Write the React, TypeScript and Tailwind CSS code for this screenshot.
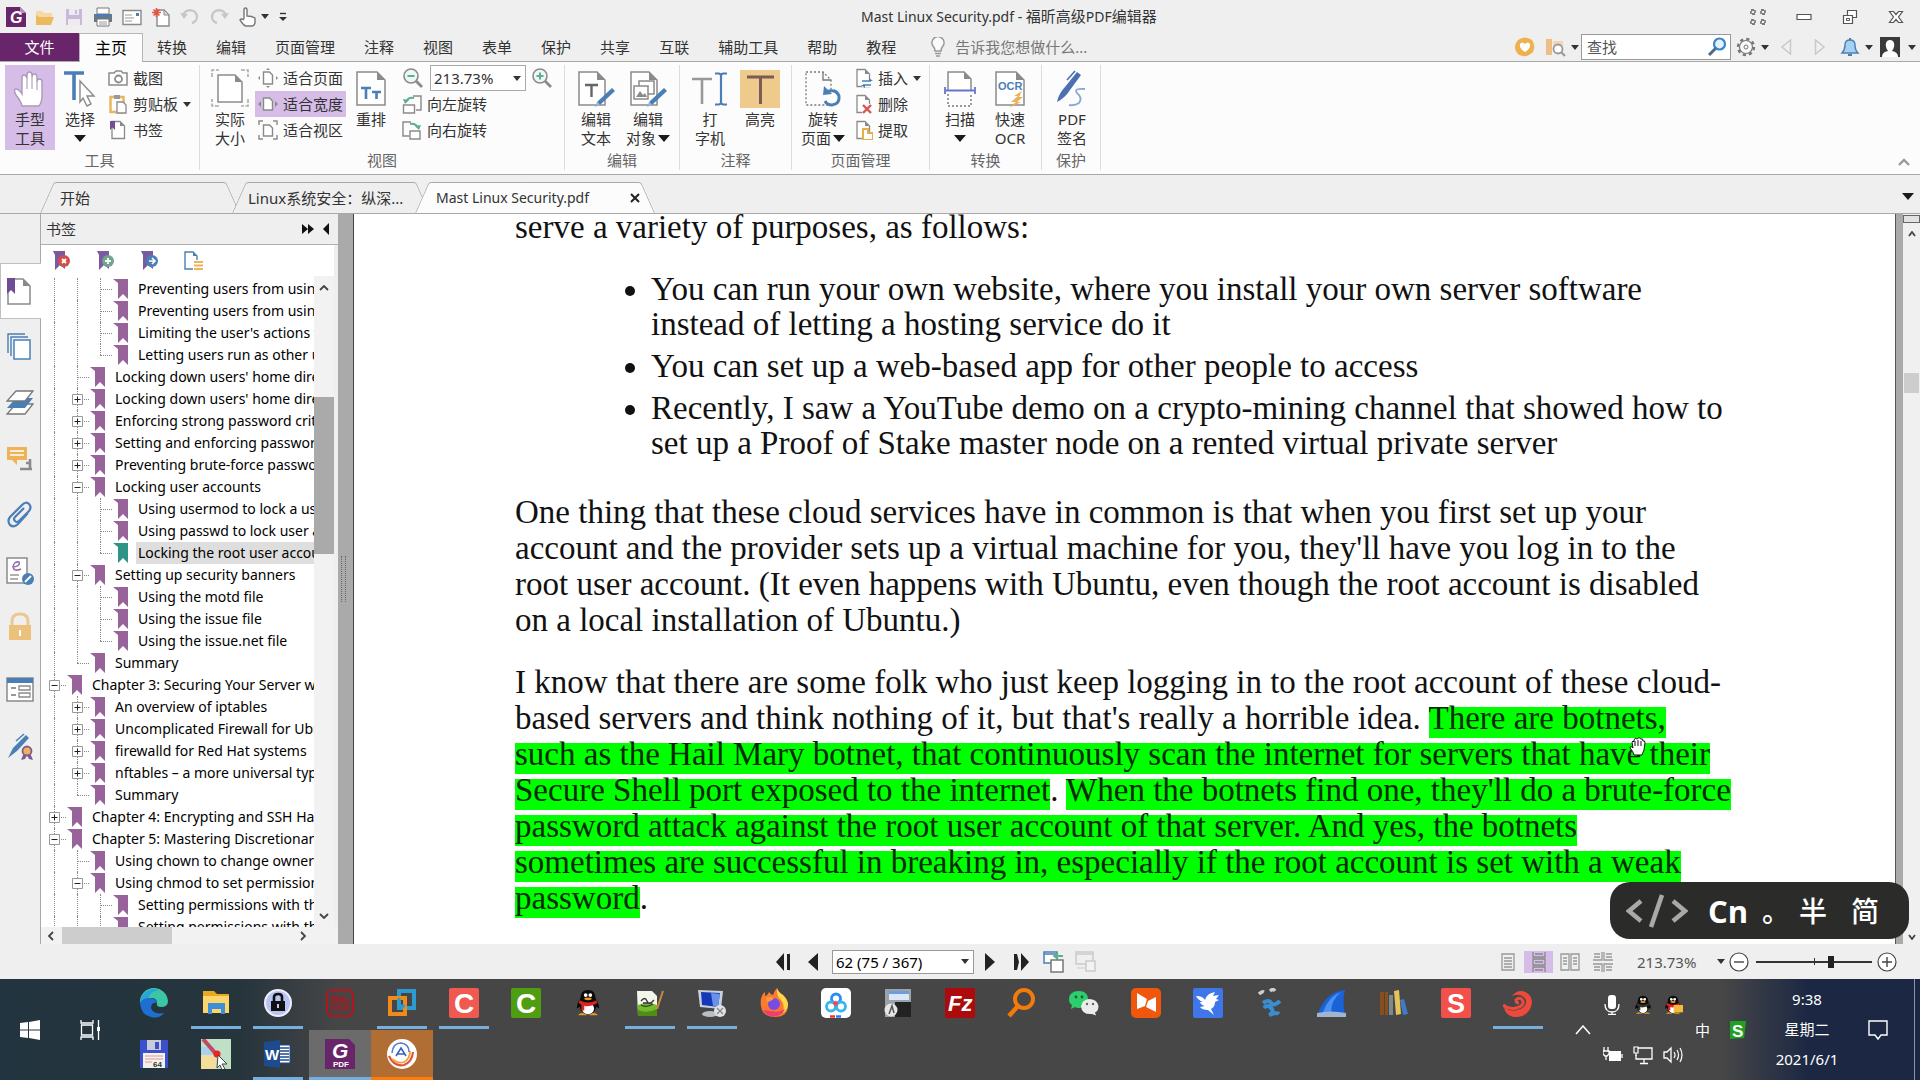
import type { ReactNode } from "react";

type IconProps = { w?: number; h?: number; box?: string; children: ReactNode };

function Icon({ w = 20, h = 20, box, children }: IconProps) {
  return (
    <svg width={w} height={h} viewBox={box ?? `0 0 ${w} ${h}`} fill="none" className="shrink-0" aria-hidden="true">
      {children}
    </svg>
  );
}

const GREY = "#8a8a8a";
const BLUE = "#4a7fb5";
const GREEN = "#5fae8f";

function Caret({ large = false }: { large?: boolean }) {
  return large ? (
    <Icon w={12} h={7}>
      <path d="M0 0h12L6 7z" fill="#1a1a1a" />
    </Icon>
  ) : (
    <Icon w={8} h={5}>
      <path d="M0 0h8L4 5z" fill="#333" />
    </Icon>
  );
}

function Page({ w = 20, h = 20, children }: { w?: number; h?: number; children?: ReactNode }) {
  return (
    <Icon w={w} h={h} box="0 0 20 20">
      <path d="M4 1.500h8l4.500 4.500v12.500H4z" fill="#fff" stroke={GREY} strokeWidth="1.300" />
      <path d="M12 1.500v4.500h4.500z" fill={GREY} />
      {children}
    </Icon>
  );
}

/* ---------- title bar ---------- */

const quickIcons = [
  {
    name: "Foxit",
    icon: (
      <Icon>
        <path d="M0 0h14l6 6v14H0z" fill="#68256a" />
        <path d="M14 0v6h6z" fill="#b98fbb" />
        <text x="4" y="16" fontSize="16" fontWeight="700" fontStyle="italic" fill="#fff" fontFamily="Liberation Sans">G</text>
      </Icon>
    ),
  },
  {
    name: "打开",
    icon: (
      <Icon>
        <path d="M1 4h6l2 2h8v4H1z" fill="#f4d9a4" />
        <path d="M1 18V8l3 2h15l-3 8z" fill="#ecb95f" />
      </Icon>
    ),
  },
  {
    name: "保存",
    icon: (
      <Icon>
        <path d="M2 2h16v16H2z" fill="#c9b9d6" />
        <path d="M5 2h10v6H5zM4 12h12v6H4z" fill="#eeeaf2" />
        <path d="M11 3h2v4h-2z" fill="#c9b9d6" />
      </Icon>
    ),
  },
  {
    name: "打印",
    icon: (
      <Icon>
        <path d="M4 1h12v6H4z" fill="#fff" stroke="#777" />
        <path d="M1 7h18v8H1z" fill="#6d7780" />
        <path d="M3 7h14v3H3z" fill={BLUE} />
        <path d="M4 12h12v7H4z" fill="#fff" stroke="#777" />
        <path d="M6 15h8M6 17h8" stroke="#999" />
      </Icon>
    ),
  },
  {
    name: "邮件",
    icon: (
      <Icon>
        <path d="M1 3.500h18v14H1z" fill="#fff" stroke="#8a8a8a" strokeWidth="1.400" />
        <path d="M3 8h7M3 11h9M3 14h7" stroke="#999" />
        <path d="M14 6h3v3h-3z" fill={BLUE} />
      </Icon>
    ),
  },
  {
    name: "新建",
    icon: (
      <Icon>
        <path d="M6 3h7l5 5v11H6z" fill="#fff" stroke={GREY} strokeWidth="1.400" />
        <path d="M13 3v5h5z" fill="#ddd" stroke={GREY} />
        <path d="M5.500 1v9M1 5.500h9M2.500 2.500l6 6M8.500 2.500l-6 6" stroke="#e0563f" strokeWidth="1.600" />
      </Icon>
    ),
  },
  {
    name: "撤销",
    icon: (
      <Icon>
        <path d="M3 9a7 6.500 0 1 1 9 7" stroke="#c3c8cc" strokeWidth="2.400" />
        <path d="M0 6l4 6 4-5z" fill="#c3c8cc" />
      </Icon>
    ),
  },
  {
    name: "重做",
    icon: (
      <Icon>
        <path d="M17 9a7 6.500 0 1 0-9 7" stroke="#c3c8cc" strokeWidth="2.400" />
        <path d="M20 6l-4 6-4-5z" fill="#c3c8cc" />
      </Icon>
    ),
  },
  {
    name: "手型",
    icon: (
      <Icon>
        <path d="M6 12V3q0-2 1.500-2T9 3v6q5 0 8 2v5q-1 3-3 3H8q-2 0-6-6 1-2 4 0" fill="#fff" stroke="#777" strokeWidth="1.400" />
      </Icon>
    ),
  },
];

function TitleBar() {
  return (
    <header className="relative flex h-[33px] items-center justify-between pl-[6px] pr-[16px]">
      <div className="flex items-center gap-[9px]">
        {quickIcons.map((item) => (
          <button key={item.name} type="button" aria-label={item.name} className="block">
            {item.icon}
          </button>
        ))}
        <div className="-ml-[6px] flex items-center gap-[10px]">
          <Caret />
          <Icon w={8} h={10}>
            <path d="M1 1.500h6" stroke="#333" strokeWidth="1.400" />
            <path d="M0 5h8L4 9z" fill="#333" />
          </Icon>
        </div>
      </div>
      <h1 className="absolute left-1/2 -translate-x-[99px] text-[14px] text-[#333]">
        Mast Linux Security.pdf - <span className="text-[15px]">福昕高级</span>PDF<span className="text-[15px]">编辑器</span>
      </h1>
      <div className="flex items-center gap-[30px]">
        <button type="button" aria-label="布局">
          <Icon w={16} h={16}>
            <path d="M1 1h4v4H1zM11 1h4v4h-4zM1 11h4v4H1zM11 11h4v4h-4z" stroke="#555" strokeWidth="1.300" strokeDasharray="3 1" />
          </Icon>
        </button>
        <button type="button" aria-label="最小化">
          <Icon w={16} h={16}>
            <path d="M1 5.500h14v5H1z" stroke="#555" strokeWidth="1.200" fill="#fff" />
          </Icon>
        </button>
        <button type="button" aria-label="还原">
          <Icon w={16} h={16}>
            <path d="M5.500 1.500h9v7h-9z" stroke="#555" strokeWidth="1.200" fill="#fff" />
            <path d="M1.500 6.500h9v8h-9z" stroke="#555" strokeWidth="1.200" fill="#fff" />
            <path d="M4.500 9.500h3v2h-3z" stroke="#555" />
          </Icon>
        </button>
        <button type="button" aria-label="关闭">
          <Icon w={16} h={16}>
            <path d="M1.500 2.500h4L8 5.500l2.500-3h4L10.500 8l4 5.500h-4L8 10.500l-2.500 3h-4L5.500 8z" stroke="#555" strokeWidth="1.200" fill="#fff" />
          </Icon>
        </button>
      </div>
    </header>
  );
}

/* ---------- menu ---------- */

const menus = ["转换", "编辑", "页面管理", "注释", "视图", "表单", "保护", "共享", "互联", "辅助工具", "帮助", "教程"];

function MenuBar() {
  return (
    <nav className="flex h-[29px] items-stretch justify-between border-b border-[#a9a9a9] text-[15px] text-[#333]">
      <div className="flex items-stretch">
        <button type="button" className="w-[79px] bg-[#68256a] text-white">文件</button>
        <button type="button" className="-mb-px w-[64px] border-x border-t border-[#b5b5b5] bg-[#fcfcfc] text-[16px] text-black">主页</button>
        {menus.map((label) => (
          <button key={label} type="button" className="pl-[14px] pr-[15px]">
            {label}
          </button>
        ))}
        <label className="ml-[19px] flex items-center gap-[9px] text-[#777]">
          <Icon w={16} h={20}>
            <path d="M5 14q0-3-2-5a6 6 0 1 1 10 0q-2 2-2 5z" stroke="#999" strokeWidth="1.600" fill="#fafafa" />
            <path d="M5 16.500h6M6 19h4" stroke="#999" strokeWidth="1.500" />
          </Icon>
          <input className="w-[150px] bg-transparent placeholder:text-[#777]" placeholder="告诉我您想做什么..." aria-label="告诉我您想做什么" />
        </label>
      </div>
      <div className="flex items-center pr-[4px]">
        <Icon w={22} h={22}>
          <path d="M4 4q7-5 14 0 4 6 1 12-5 5-10 4-7-1-8-8 0-5 3-8z" fill="#efb14f" />
          <path d="M11 16q-6-4-5-8 2-3 5 0 3-3 5 0 1 4-5 8z" fill="#fff" />
        </Icon>
        <div className="ml-[9px] flex items-center gap-[5px]">
          <Icon w={21} h={20}>
            <path d="M1 2h6v16H1z" fill="#eebe84" />
            <path d="M8 4h10v5H8z" fill="#f3d6ae" />
            <circle cx="13" cy="12" r="4.500" fill="#fff" stroke="#999" strokeWidth="1.800" />
            <path d="M16 15l4 4" stroke="#999" strokeWidth="2.200" />
          </Icon>
          <Caret />
        </div>
        <div className="ml-[2px] flex h-[26px] w-[150px] items-center border border-[#9a9a9a] bg-white pl-[5px]">
          <input className="w-[120px] min-w-0 bg-transparent placeholder:text-[#555]" placeholder="查找" aria-label="查找" />
          <Icon w={20} h={20}>
            <circle cx="12.500" cy="7" r="5.500" stroke="#3a84c8" strokeWidth="2.200" fill="#e4f2fc" />
            <path d="M8.500 11.500L2 18" stroke="#4a6a88" strokeWidth="3" />
          </Icon>
        </div>
        <div className="ml-[5px] flex items-center gap-[5px]">
          <Icon w={20} h={20}>
            <circle cx="10" cy="10" r="8" stroke="#777" strokeWidth="2.400" strokeDasharray="3.200 3.080" />
            <circle cx="10" cy="10" r="6.500" stroke="#777" strokeWidth="1.200" fill="#fafafa" />
            <circle cx="10" cy="10" r="2" stroke="#777" />
          </Icon>
          <Caret />
        </div>
        <div className="ml-[11px] flex gap-[22px]">
          <Icon w={12} h={16}>
            <path d="M10.500 1v14L2 8z" stroke="#c9c9c9" strokeWidth="1.500" />
          </Icon>
          <Icon w={12} h={16}>
            <path d="M1.500 1v14L10 8z" stroke="#c9c9c9" strokeWidth="1.500" />
          </Icon>
        </div>
        <div className="ml-[13px] flex items-center gap-[4px]">
          <Icon w={22} h={20}>
            <path d="M3 16q3-3 3-8 0-5 5-5t5 5q0 5 3 8z" fill="#a7d1f0" stroke={BLUE} strokeWidth="1.400" />
            <path d="M9 17h4v2H9zM10 1h2v2h-2z" fill={BLUE} />
          </Icon>
          <Caret />
        </div>
        <div className="ml-[7px] flex items-center gap-[8px]">
          <Icon>
            <path d="M0 0h20v20H0z" fill="#3a3a3a" />
            <path d="M2 20q0-5 6-6-3-4-2-8 1-3 4-3t4 3q1 4-2 8 6 1 6 6z" fill="#fff" />
          </Icon>
          <Caret />
        </div>
      </div>
    </nav>
  );
}

/* ---------- ribbon ---------- */

type BigProps = { icon: ReactNode; lines: ReactNode[]; active?: boolean; wide?: boolean };

function BigButton({ icon, lines, active, wide }: BigProps) {
  return (
    <button
      type="button"
      className={`flex h-[85px] shrink-0 flex-col items-center pt-[3px] ${wide ? "w-[52px]" : "w-[50px]"} ${active ? "bg-[#d5bde8]" : ""}`}
    >
      <span className="flex h-[42px] items-center justify-center">{icon}</span>
      {lines.map((line, index) => (
        <span key={index} className="flex h-[19px] items-center justify-center gap-[2px] leading-[19px] whitespace-nowrap">
          {line}
        </span>
      ))}
    </button>
  );
}

function SmallButton({ icon, label, caret, active }: { icon: ReactNode; label: string; caret?: boolean; active?: boolean }) {
  return (
    <button type="button" className={`flex h-[26px] items-center gap-[5px] px-[3px] ${active ? "bg-[#d5bde8]" : ""}`}>
      {icon}
      <span className="whitespace-nowrap">{label}</span>
      {caret ? <Caret /> : null}
    </button>
  );
}

function Group({ label, className, children }: { label: string; className: string; children: ReactNode }) {
  return (
    <section className={`flex shrink-0 flex-col border-r border-[#dcdcdc] ${className}`}>
      <div className="flex flex-1 items-start pl-[5px]">{children}</div>
      <h2 className="h-5 text-center leading-5 text-[#666]">{label}</h2>
    </section>
  );
}

const bigPage = (
  <>
    <path d="M2 2h20l8 8v25H2z" fill="#fff" stroke={GREY} strokeWidth="1.500" />
    <path d="M22 2v8h8z" fill={GREY} />
  </>
);

const pencil = (
  <>
    <path d="M35 18l3 3-15 14-3-3z" fill={BLUE} />
    <path d="M20 32l3 3-5 2z" fill="#8db4d8" />
  </>
);

const corners = <path d="M1 8V1h7M30 1h7v7M37 30v7h-7M8 37H1v-7" stroke="#aaa" strokeWidth="1.600" strokeDasharray="4 1.500" />;

function Ribbon() {
  return (
    <div className="flex h-[113px] items-stretch justify-between border-b border-[#a9a9a9] bg-[#fcfcfc] pt-[3px] pb-[4px] text-[15px] text-[#333]">
      <div className="flex items-stretch">
        <Group label="工具" className="w-[200px]">
          <BigButton
            active
            lines={["手型", "工具"]}
            icon={
              <Icon w={32} h={38}>
                <path
                  d="M8 36q-1-5-6-11-3-6 0-6 3 0 6 5V8q0-3 2-3t3 3V5q0-3 2.500-3T18 5v2q0-3 2.500-3T23 8v4q0-3 2.500-3T28 12v14q0 6-3 10z"
                  fill="#fff"
                  stroke="#a99bb8"
                  strokeWidth="1.400"
                />
                <path d="M13 8v11M18 7v12M23 12v8" stroke="#b9acc6" strokeWidth="1.300" />
              </Icon>
            }
          />
          <BigButton
            lines={["选择", <Caret key="c" large />]}
            icon={
              <Icon w={34} h={38}>
                <path d="M1 3h20M11 3v27" stroke={BLUE} strokeWidth="3.600" />
                <path d="M17 11l14 15h-7l4 8-4 2-4-8-3 4z" fill="#fff" stroke={GREY} strokeWidth="1.400" />
              </Icon>
            }
          />
          <div className="flex flex-col">
            <SmallButton
              label="截图"
              icon={
                <Icon>
                  <path d="M1 5h5l2-2h5l2 2h4v12H1z" fill="#fff" stroke={GREY} strokeWidth="1.500" />
                  <circle cx="10.500" cy="11" r="3.500" stroke={GREY} strokeWidth="1.800" />
                </Icon>
              }
            />
            <SmallButton
              label="剪贴板"
              caret
              icon={
                <Icon>
                  <path d="M2.500 3h13v15h-13z" fill="#fff" stroke="#e8b45d" strokeWidth="2.400" />
                  <path d="M6 1h6v4H6z" fill="#999" />
                  <path d="M9 8h6l3 3v8H9z" fill="#fff" stroke={GREY} strokeWidth="1.300" />
                </Icon>
              }
            />
            <SmallButton
              label="书签"
              icon={
                <Page>
                  <path d="M2 1h5v9L4.500 7.500 2 10z" fill="#7a4b95" />
                </Page>
              }
            />
          </div>
        </Group>

        <Group label="视图" className="w-[365px]">
          <BigButton
            lines={["实际", "大小"]}
            icon={
              <Icon w={38} h={40}>
                {corners}
                <path d="M7 6h17l7 7v20H7z" fill="#fff" stroke={GREY} strokeWidth="1.500" />
                <path d="M24 6v7h7z" fill={GREY} />
              </Icon>
            }
          />
          <div className="flex flex-col">
            <SmallButton
              label="适合页面"
              icon={
                <Icon>
                  <path d="M5.500 4h6l3 3v9h-9z" fill="#fff" stroke={GREY} strokeWidth="1.400" />
                  <path d="M8 2l2-2 2 2zM8 18l2 2 2-2zM2 8l-2 2 2 2zM18 8l2 2-2 2z" fill={GREY} />
                </Icon>
              }
            />
            <SmallButton
              active
              label="适合宽度"
              icon={
                <Icon>
                  <path d="M5.500 4h6l3 3v9h-9z" fill="#fff" stroke={GREY} strokeWidth="1.400" />
                  <path d="M3 7l-3 3 3 3zM17 7l3 3-3 3z" fill={GREY} />
                </Icon>
              }
            />
            <SmallButton
              label="适合视区"
              icon={
                <Icon>
                  <path d="M5.500 5h6l3 3v8h-9z" fill="#fff" stroke={GREY} strokeWidth="1.400" />
                  <path d="M1 5V1h4M15 1h4v4M19 15v4h-4M5 19H1v-4" stroke={GREY} strokeWidth="1.400" />
                </Icon>
              }
            />
          </div>
          <BigButton
            lines={["重排"]}
            icon={
              <Icon w={32} h={38}>
                {bigPage}
                <path d="M6 18h10M11 18v11M17 22h9M21.500 22v7" stroke={BLUE} strokeWidth="2.600" />
              </Icon>
            }
          />
          <div className="flex flex-col pl-[3px]">
            <div className="flex h-[26px] items-center gap-[5px] px-[3px]">
              <Icon w={23} h={22}>
                <circle cx="9" cy="9" r="7" stroke={GREY} strokeWidth="1.600" fill="#eef8f3" />
                <path d="M5.500 9h7" stroke={GREEN} strokeWidth="2" />
                <path d="M14 14l6 6" stroke={GREY} strokeWidth="2.800" />
              </Icon>
              <div className="relative flex h-[26px] w-[96px] items-center border border-[#a9a9a9] bg-white">
                <select aria-label="缩放" className="w-full appearance-none bg-transparent pl-[3px] leading-6">
                  <option>213.73%</option>
                </select>
                <span className="pointer-events-none absolute right-[4px]">
                  <Caret />
                </span>
              </div>
              <Icon w={23} h={22}>
                <circle cx="9" cy="9" r="7" stroke={GREY} strokeWidth="1.600" fill="#eef8f3" />
                <path d="M5.500 9h7M9 5.500v7" stroke={GREEN} strokeWidth="2" />
                <path d="M14 14l6 6" stroke={GREY} strokeWidth="2.800" />
              </Icon>
            </div>
            <SmallButton
              label="向左旋转"
              icon={
                <Icon>
                  <path d="M11 2h8v14h-5" stroke={GREY} strokeWidth="1.400" />
                  <path d="M1.500 11h11v8h-11z" fill="#fff" stroke={GREY} strokeWidth="1.400" />
                  <path d="M12 4Q6 3 4 8" stroke={GREEN} strokeWidth="2" />
                  <path d="M1 5l6 1-4 4z" fill={GREEN} />
                </Icon>
              }
            />
            <SmallButton
              label="向右旋转"
              icon={
                <Icon>
                  <path d="M7 16H1V2h8" stroke={GREY} strokeWidth="1.400" />
                  <path d="M8 11h10v8H8z" fill="#fff" stroke={GREY} strokeWidth="1.400" />
                  <path d="M8 4q6-1 8 4" stroke={GREEN} strokeWidth="2" />
                  <path d="M19 5l-6 1 4 4z" fill={GREEN} />
                </Icon>
              }
            />
          </div>
        </Group>

        <Group label="编辑" className="w-[115px]">
          <BigButton
            wide
            lines={["编辑", "文本"]}
            icon={
              <Icon w={38} h={38}>
                <path d="M2 2h18l8 8v25H2z" fill="#fff" stroke={GREY} strokeWidth="1.500" />
                <path d="M20 2v8h8z" fill={GREY} />
                <path d="M8 15h13M14.500 15v12" stroke="#666" strokeWidth="2.400" />
                {pencil}
              </Icon>
            }
          />
          <BigButton
            wide
            lines={["编辑", <>对象<Caret large /></>]}
            icon={
              <Icon w={38} h={38}>
                <path d="M2 2h18l8 8v25H2z" fill="#fff" stroke={GREY} strokeWidth="1.500" />
                <path d="M20 2v8h8z" fill={GREY} />
                <path d="M10 11h15v13H10z" fill="#fff" stroke={GREY} strokeWidth="1.500" />
                <path d="M5 16h14v13H5z" fill="#fff" stroke={GREY} strokeWidth="1.500" />
                <path d="M7 27l4-6 3 4 2-2 2 4z" fill={GREY} />
                {pencil}
              </Icon>
            }
          />
        </Group>

        <Group label="注释" className="w-[112px]">
          <BigButton
            lines={["打", "字机"]}
            icon={
              <Icon w={38} h={38}>
                <path d="M1 9h20M11 9v25" stroke="#999" strokeWidth="2.600" />
                <path d="M24 3.500h4l2 1 2-1h4M24 34.500h4l2-1 2 1h4M30 4v30" stroke={BLUE} strokeWidth="2.200" />
              </Icon>
            }
          />
          <BigButton
            lines={["高亮"]}
            icon={
              <Icon w={40} h={38}>
                <path d="M0 0h40v38H0z" fill="#eecb8c" />
                <path d="M7 7h27M20.500 7v27" stroke="#7b5b55" strokeWidth="3" />
              </Icon>
            }
          />
        </Group>

        <Group label="页面管理" className="w-[138px]">
          <BigButton
            wide
            lines={["旋转", <>页面<Caret large /></>]}
            icon={
              <Icon w={38} h={38}>
                <path d="M2 2h17l8 8v25H2z" stroke="#777" strokeWidth="1.300" strokeDasharray="2 2" />
                <path d="M19 2v8h8" stroke="#777" strokeWidth="1.300" />
                <path d="M22 22q10-4 13 4 1 8-7 9-5 0-7-4" fill="#fff" stroke={BLUE} strokeWidth="3" />
                <path d="M20 16l-1 9 9-1z" fill={BLUE} />
              </Icon>
            }
          />
          <div className="flex flex-col pl-px">
            <SmallButton
              label="插入"
              caret
              icon={
                <Page>
                  <path d="M9 11h11v8H9z" fill="#fcfcfc" />
                  <path d="M9 13h9M18 17h-8" stroke={BLUE} strokeWidth="1.600" />
                  <path d="M16 10l4 3h-4zM12 20l-4-3h4z" fill={BLUE} />
                </Page>
              }
            />
            <SmallButton
              label="删除"
              icon={
                <Page>
                  <path d="M9 10h11v10H9z" fill="#fcfcfc" />
                  <path d="M10 11l8 8M18 11l-8 8" stroke="#d9534f" strokeWidth="2.400" />
                </Page>
              }
            />
            <SmallButton
              label="提取"
              icon={
                <Page>
                  <path d="M10 9h5v4h5v7H10z" fill="#fff" stroke="#e9ae4c" strokeWidth="2" />
                </Page>
              }
            />
          </div>
        </Group>

        <Group label="转换" className="w-[112px]">
          <BigButton
            lines={["扫描", <Caret key="c" large />]}
            icon={
              <Icon w={32} h={38}>
                <path d="M4 20V2h16l7 7v11" fill="#fff" stroke={GREY} strokeWidth="1.500" />
                <path d="M20 2v7h7z" fill={GREY} />
                <path d="M1 20.500h30M1 17v7M31 17v7" stroke="#6a74c9" strokeWidth="1.800" />
                <path d="M4 24v12h23V24" stroke="#777" strokeDasharray="2 2" strokeWidth="1.400" />
              </Icon>
            }
          />
          <BigButton
            lines={["快速", "OCR"]}
            icon={
              <Icon w={32} h={38}>
                {bigPage}
                <text x="4" y="20" fontSize="11" fontWeight="700" fill={BLUE} fontFamily="Liberation Sans">OCR</text>
                <path d="M28 21l-8 5h4l-7 6h5l-7 6 12-6h-4l6-5h-4z" fill="#ecb05a" />
              </Icon>
            }
          />
        </Group>

        <Group label="保护" className="w-[59px]">
          <BigButton
            lines={["PDF", "签名"]}
            icon={
              <Icon w={34} h={38}>
                <path d="M22 2l4 3-11 15q-5 8-13 12 2-9 8-15z" fill="#4b6fb0" />
                <path d="M12 10l8-9" stroke="#4b6fb0" strokeWidth="1.600" />
                <path d="M30 19q-12-1-8 4 6 5 2 10-4 3-10 2" stroke="#8fa8cf" strokeWidth="1.800" />
              </Icon>
            }
          />
        </Group>
      </div>
      <div className="flex items-end pr-[10px] pb-[4px]">
        <Icon w={12} h={8}>
          <path d="M1 7l5-5 5 5" stroke="#999" strokeWidth="2.400" />
        </Icon>
      </div>
    </div>
  );
}

/* ---------- document tabs ---------- */

function DocTab({ children, active, className }: { children: ReactNode; active?: boolean; className: string }) {
  const fill = active ? "bg-[#fcfcfc]" : "bg-[#efefef]";
  return (
    <div role="tab" aria-selected={active ?? false} className={`relative flex h-[31px] items-center justify-between pr-[15px] ${active ? "-mb-px" : ""} ${className}`}>
      <span className={`absolute inset-y-0 left-0 w-1/2 origin-bottom-left -skew-x-[24deg] rounded-tl-[3px] border-t border-l border-[#a9a9a9] ${fill}`} />
      <span className={`absolute inset-y-0 right-0 w-1/2 origin-bottom-right skew-x-[24deg] rounded-tr-[3px] border-t border-r border-[#a9a9a9] ${fill}`} />
      <span className={`absolute inset-x-[30px] top-px bottom-0 ${fill}`} />
      <span className="relative whitespace-nowrap">{children}</span>
      {active ? (
        <button type="button" aria-label="关闭标签" className="relative">
          <Icon w={10} h={10}>
            <path d="M1 1l8 8M9 1l-8 8" stroke="#222" strokeWidth="2" />
          </Icon>
        </button>
      ) : null}
    </div>
  );
}

function DocTabs() {
  return (
    <div className="flex h-[39px] items-end justify-between border-b border-[#a9a9a9] pr-[6px] pl-[40px] text-[15px] text-[#333]">
      <div className="flex" role="tablist">
        <DocTab className="w-[200px] pl-[20px]">开始</DocTab>
        <DocTab className="-ml-[8px] w-[198px] pl-[16px]">Linux系统安全：纵深...</DocTab>
        <DocTab active className="-ml-[15px] w-[240px] pl-[21px] text-[14px]">
          Mast Linux Security.pdf
        </DocTab>
      </div>
      <span className="pb-[13px]">
        <Caret large />
      </span>
    </div>
  );
}

/* ---------- navigation panel ---------- */

const railIcons = [
  {
    name: "页面缩略图",
    icon: (
      <Icon w={28} h={28}>
        <path d="M8 7h16v19H8z" fill="#fff" stroke={BLUE} strokeWidth="1.500" />
        <path d="M5 23V4h17M2 20V1h17" stroke={BLUE} strokeWidth="1.400" />
      </Icon>
    ),
  },
  {
    name: "图层",
    icon: (
      <Icon w={28} h={28}>
        <path d="M10 15h17l-8 10H1z" fill="#fff" stroke="#777" strokeWidth="1.300" />
        <path d="M10 9h17l-8 10H1z" fill={BLUE} />
        <path d="M10 2h17l-8 10H1z" fill="#fff" stroke="#777" strokeWidth="1.300" />
      </Icon>
    ),
  },
  {
    name: "注释",
    icon: (
      <Icon w={28} h={28}>
        <path d="M1 2h20v13H11v5l-5-5H1z" fill="#eeb257" />
        <path d="M4 6h14M4 10h14" stroke="#fff" strokeWidth="1.400" />
        <path d="M24 14v11M14 24h12M24 18h-4" stroke="#8a8a8a" strokeWidth="2.600" />
      </Icon>
    ),
  },
  {
    name: "附件",
    icon: (
      <Icon w={28} h={28}>
        <path d="M22 12L12 23q-4 4-8 1-3-4 0-8L16 4q4-4 7-1t0 7L13 20q-2 2-4 0t0-4l9-9" stroke={BLUE} strokeWidth="2.200" />
      </Icon>
    ),
  },
  {
    name: "签名",
    icon: (
      <Icon w={28} h={28}>
        <path d="M1 1h20v25H1z" fill="#fff" stroke={GREY} strokeWidth="1.500" />
        <path d="M7 10q8-1 6-5-5-1-6 5 1 5 8 2" stroke="#9a6fae" strokeWidth="1.600" />
        <path d="M4 18h9M4 22h8" stroke="#999" strokeWidth="1.300" />
        <circle cx="22" cy="22" r="6" fill={BLUE} />
        <path d="M19 25l6-6" stroke="#fff" strokeWidth="1.800" />
      </Icon>
    ),
  },
  {
    name: "安全",
    icon: (
      <Icon w={28} h={30}>
        <path d="M6 14V9q0-7 8-7t8 7v5" stroke="#e9c98f" strokeWidth="3" />
        <path d="M3 13h22v15H3z" fill="#ecc17b" />
        <path d="M13 18h2v6h-2z" fill="#fff" />
      </Icon>
    ),
  },
  {
    name: "域",
    icon: (
      <Icon w={28} h={28}>
        <path d="M1 2h26v23H1z" fill="#fff" stroke={GREY} strokeWidth="1.500" />
        <path d="M1 2h26v5H1z" fill={BLUE} />
        <path d="M5 12h5M5 19h5" stroke="#777" strokeWidth="1.500" />
        <path d="M13 10h11v4H13zM13 17h11v4H13z" stroke={GREY} strokeWidth="1.300" />
      </Icon>
    ),
  },
  {
    name: "数字签名",
    icon: (
      <Icon w={28} h={28}>
        <path d="M20 2l3 3-12 13-9 7 5-10z" fill={BLUE} />
        <path d="M10 8l8-7" stroke={BLUE} strokeWidth="1.500" />
        <path d="M18 20l-3 7 4-1 2-4 2 4 4 1-3-7z" fill="#7d5a93" />
        <circle cx="21" cy="18" r="4.500" fill="#eeb257" stroke="#7d5a93" strokeWidth="1.800" />
      </Icon>
    ),
  },
];

function Rail() {
  return (
    <div className="flex w-[41px] shrink-0 flex-col border-r border-[#a9a9a9] pt-[49px]">
      <button type="button" aria-label="书签" className="-mr-px flex h-[56px] items-center justify-center border-y border-l border-[#c0c0c0] bg-white pr-[4px]">
        <Icon w={26} h={30}>
          <path d="M2 3h15l7 7v18H2z" fill="#fff" stroke={GREY} strokeWidth="1.500" />
          <path d="M17 3v7h7z" fill={GREY} />
          <path d="M1 2h8v16l-4-4-4 4z" fill="#6f4c93" />
        </Icon>
      </button>
      {railIcons.map((item) => (
        <button key={item.name} type="button" aria-label={item.name} className={`flex items-center justify-center ${item.name === "域" ? "mt-[6px] h-[58px]" : "h-14"}`}>
          {item.icon}
        </button>
      ))}
    </div>
  );
}

type Bookmark = { label: string; depth: 1 | 2 | 3; toggle?: "+" | "-"; last?: boolean; current?: boolean };

const bookmarks: Bookmark[] = [
  { label: "Preventing users from using", depth: 3 },
  { label: "Preventing users from using", depth: 3 },
  { label: "Limiting the user's actions with", depth: 3 },
  { label: "Letting users run as other users", depth: 3, last: true },
  { label: "Locking down users' home directories", depth: 2 },
  { label: "Locking down users' home directories", depth: 2, toggle: "+" },
  { label: "Enforcing strong password criteria", depth: 2, toggle: "+" },
  { label: "Setting and enforcing password", depth: 2, toggle: "+" },
  { label: "Preventing brute-force password", depth: 2, toggle: "+" },
  { label: "Locking user accounts", depth: 2, toggle: "-" },
  { label: "Using usermod to lock a user", depth: 3 },
  { label: "Using passwd to lock user accounts", depth: 3 },
  { label: "Locking the root user account", depth: 3, last: true, current: true },
  { label: "Setting up security banners", depth: 2, toggle: "-" },
  { label: "Using the motd file", depth: 3 },
  { label: "Using the issue file", depth: 3 },
  { label: "Using the issue.net file", depth: 3, last: true },
  { label: "Summary", depth: 2, last: true },
  { label: "Chapter 3: Securing Your Server with", depth: 1, toggle: "-" },
  { label: "An overview of iptables", depth: 2, toggle: "+" },
  { label: "Uncomplicated Firewall for Ubuntu", depth: 2, toggle: "+" },
  { label: "firewalld for Red Hat systems", depth: 2, toggle: "+" },
  { label: "nftables – a more universal type", depth: 2, toggle: "+" },
  { label: "Summary", depth: 2, last: true },
  { label: "Chapter 4: Encrypting and SSH Hardening", depth: 1, toggle: "+" },
  { label: "Chapter 5: Mastering Discretionary", depth: 1, toggle: "-" },
  { label: "Using chown to change ownership", depth: 2 },
  { label: "Using chmod to set permissions", depth: 2, toggle: "-" },
  { label: "Setting permissions with the", depth: 3 },
  { label: "Setting permissions with the", depth: 3 },
];

function TreeRow({ item }: { item: Bookmark }) {
  return (
    <li className="flex h-[22px] items-center">
      {Array.from({ length: item.depth }, (_, level) => {
        const own = level === item.depth - 1;
        return (
          <span key={level} className="relative h-full w-[23px] shrink-0">
            <span className={`absolute top-0 left-[11px] border-l border-dotted border-[#888] ${own && item.last ? "h-1/2" : "h-full"}`} />
            {own ? <span className="absolute top-[11px] right-0 left-[11px] border-t border-dotted border-[#888]" /> : null}
            {own && item.toggle ? (
              <button type="button" aria-label={item.toggle === "+" ? "展开" : "折叠"} className="absolute top-[6px] left-[6px]">
                <Icon w={11} h={11}>
                  <path d="M.5.5h10v10H.5z" fill="#fff" stroke="#999" />
                  <path d={item.toggle === "+" ? "M2.500 5.500h6M5.500 2.500v6" : "M2.500 5.500h6"} stroke="#222" />
                </Icon>
              </button>
            ) : null}
          </span>
        );
      })}
      <span className="w-[24px] shrink-0">
        <Icon w={18} h={20}>
          <path d="M1 0h15v20l-5-5-5 5V4z" fill={item.current ? "#2f9488" : "#98639a"} />
        </Icon>
      </span>
      <a href="#bookmark" className={`h-[22px] flex-1 pl-[2px] leading-[22px] whitespace-nowrap text-black ${item.current ? "bg-[#dedede]" : ""}`}>
        {item.label}
      </a>
    </li>
  );
}

const flag = <path d="M1 0h12v18l-5-4-5 5V4z" fill="#7a5aa0" />;

function BookmarkPanel() {
  return (
    <aside className="flex w-[297px] shrink-0 flex-col">
      <div className="flex h-[31px] items-center justify-between border-b border-[#b0b0b0] pr-[9px] pl-[5px]">
        <h2 className="text-[15px] text-[#333]">书签</h2>
        <div className="flex items-center gap-[9px]">
          <Icon w={12} h={10}>
            <path d="M0 0l6 5-6 5zM6 0l6 5-6 5z" fill="#111" />
          </Icon>
          <Icon w={6} h={12}>
            <path d="M6 0v12L0 6z" fill="#111" />
          </Icon>
        </div>
      </div>
      <div className="mr-[4px] flex h-[31px] items-center gap-[24px] bg-white pl-[11px]">
        <Icon>
          {flag}
          <circle cx="12" cy="10" r="6" fill="#d2504a" />
          <path d="M10 8l4 4M14 8l-4 4" stroke="#fff" strokeWidth="1.800" />
        </Icon>
        <Icon>
          {flag}
          <circle cx="12" cy="10" r="6" fill="#6fa58c" />
          <path d="M12 7v6M9 10h6" stroke="#fff" strokeWidth="1.800" />
        </Icon>
        <Icon>
          {flag}
          <circle cx="12" cy="10" r="6" fill={BLUE} />
          <path d="M9 10h5M12 7l3 3-3 3" stroke="#fff" strokeWidth="1.600" />
        </Icon>
        <Icon>
          <path d="M9 18H1V1h8l4 4v4" stroke={BLUE} strokeWidth="1.400" />
          <path d="M9 1v4h4z" fill={BLUE} />
          <path d="M10 11h9M10 14.500h9M10 18h9" stroke="#eeb257" strokeWidth="1.800" />
        </Icon>
      </div>
      <div className="flex min-h-0 flex-1">
        <ul className="min-w-0 flex-1 overflow-hidden bg-white pt-[2px] pl-[2px] font-['Noto_Sans','Noto_Sans_CJK_SC',sans-serif] text-[14px]">
          {bookmarks.map((item, index) => (
            <TreeRow key={index} item={item} />
          ))}
        </ul>
        <div className="mr-[4px] flex w-[20px] flex-col items-center justify-between bg-[#f2f2f2] pt-[9px] pb-[8px]">
          <Icon w={10} h={6}>
            <path d="M1 5l4-4 4 4" stroke="#444" strokeWidth="1.800" />
          </Icon>
          <div className="mt-[106px] mb-auto h-[157px] w-full bg-[#aaa]" />
          <Icon w={10} h={6}>
            <path d="M1 1l4 4 4-4" stroke="#444" strokeWidth="1.800" />
          </Icon>
        </div>
      </div>
      <div className="flex h-[17px] items-center bg-[#f2f2f2] pr-[31px] pl-[6px]">
        <Icon w={7} h={10}>
          <path d="M6 1L2 5l4 4" stroke="#444" strokeWidth="1.800" />
        </Icon>
        <div className="ml-[8px] h-full w-[110px] bg-[#cdcdcd]" />
        <span className="ml-auto">
          <Icon w={7} h={10}>
            <path d="M1 1l4 4-4 4" stroke="#444" strokeWidth="1.800" />
          </Icon>
        </span>
      </div>
    </aside>
  );
}

/* ---------- document ---------- */

function Mark({ children }: { children: ReactNode }) {
  return <mark className="box-decoration-clone bg-transparent bg-[linear-gradient(transparent_7px,#00ff00_7px)] pb-[2px] text-[#022b02]">{children}</mark>;
}

function DocumentView() {
  return (
    <main className="relative min-w-0 flex-1 overflow-hidden border-l border-[#444] bg-white">
      <article className="-mt-[5px] pl-[161px] font-['Liberation_Serif',serif] text-[33px] leading-[36px] whitespace-nowrap text-[#111]">
        <p>serve a variety of purposes, as follows:</p>
        <ul className="mt-[27px] list-disc space-y-[7px] pl-[136px] leading-[35px]">
          <li>
            You can run your own website, where you install your own server software
            <br />
            instead of letting a hosting service do it
          </li>
          <li>You can set up a web-based app for other people to access</li>
          <li>
            Recently, I saw a YouTube demo on a crypto-mining channel that showed how to
            <br />
            set up a Proof of Stake master node on a rented virtual private server
          </li>
        </ul>
        <p className="mt-[33px]">
          One thing that these cloud services have in common is that when you first set up your
          <br />
          account and the provider sets up a virtual machine for you, they'll have you log in to the
          <br />
          root user account. (It even happens with Ubuntu, even though the root account is disabled
          <br />
          on a local installation of Ubuntu.)
        </p>
        <p className="mt-[26px]">
          I know that there are some folk who just keep logging in to the root account of these cloud-
          <br />
          based servers and think nothing of it, but that's really a horrible idea. <Mark>There are botnets,</Mark>
          <br />
          <Mark>such as the Hail Mary botnet, that continuously scan the internet for servers that have their</Mark>
          <br />
          <Mark>Secure Shell port exposed to the internet</Mark>. <Mark>When the botnets find one, they'll do a brute-force</Mark>
          <br />
          <Mark>password attack against the root user account of that server. And yes, the botnets</Mark>
          <br />
          <Mark>sometimes are successful in breaking in, especially if the root account is set with a weak</Mark>
          <br />
          <Mark>password</Mark>.
        </p>
      </article>
      <span className="absolute top-[523px] left-[1275px]">
        <Icon w={17} h={20}>
          <path d="M5 18q-1-4-4-7 0-3 3 0L3 5q1-2 2 0V3q1-3 3-1 2-3 4 0 2-1 2 2 2-1 2 2l-1 7q-1 2-2 5z" fill="#fff" stroke="#111" />
          <path d="M6 4v5M9 3v6M12 4v5" stroke="#111" />
        </Icon>
      </span>
    </main>
  );
}

function InputMethodBar() {
  return (
    <div className="absolute right-[11px] bottom-[5px] flex h-[57px] w-[299px] items-center rounded-[20px] bg-[#2b2c2a] pl-[16px] font-['Open_Sans','Noto_Sans_CJK_SC',sans-serif] text-[28px] text-white">
      <Icon w={62} h={36}>
        <path d="M15 8L3 18l12 10M47 8l12 10-12 10M36 2L25 34" stroke="#a9a9a9" strokeWidth="4.500" />
      </Icon>
      <b className="ml-[20px] w-[42px] text-[31px]">Cn</b>
      <span className="ml-[12px] w-[28px] font-medium">。</span>
      <span className="ml-[9px] w-[28px] font-medium">半</span>
      <span className="ml-[24px] w-[28px] font-medium">简</span>
    </div>
  );
}

function Workspace() {
  return (
    <div className="relative flex h-[730px]">
      <Rail />
      <BookmarkPanel />
      <div className="flex w-[15px] shrink-0 items-center bg-[#aaa] pl-[3px]">
        <div className="h-[46px] w-[5px] border-x border-dotted border-[#666]" />
      </div>
      <DocumentView />
      <div className="w-[8px] shrink-0 border-l border-[#555] bg-[#aaa]" />
      <div className="flex w-[17px] shrink-0 flex-col items-center bg-[#f0f0f0] pt-[1px] pb-[4px]">
        <div className="h-[8px] w-full border border-[#666] bg-[#e2e2e2]" />
        <div className="mt-[8px]">
          <Icon w={8} h={6}>
            <path d="M1 5l3-4 3 4" stroke="#444" strokeWidth="1.800" />
          </Icon>
        </div>
        <div className="mt-[136px] mb-auto h-[20px] w-[15px] bg-[#cdcdcd]" />
        <Icon w={8} h={6}>
          <path d="M1 1l3 4 3-4" stroke="#444" strokeWidth="1.800" />
        </Icon>
      </div>
      <InputMethodBar />
    </div>
  );
}

/* ---------- status bar ---------- */

function StatusBar() {
  return (
    <footer className="relative flex h-[35px] items-center justify-end pr-[23px] text-[15px] text-[#333]">
      <div className="absolute left-[776px] flex items-center">
        <button type="button" aria-label="第一页">
          <Icon w={16} h={18}>
            <path d="M8 0v18L0 9zM14 0v18q-4-9 0-18z" fill="#222" />
            <path d="M11 1h3v16h-3z" fill="#222" />
          </Icon>
        </button>
        <button type="button" aria-label="上一页" className="ml-[16px]">
          <Icon w={10} h={18}>
            <path d="M10 0v18L0 9z" fill="#222" />
          </Icon>
        </button>
        <div className="relative ml-[14px] flex h-[24px] w-[142px] items-center border border-[#999] bg-white">
          <select aria-label="页码" className="w-full appearance-none bg-transparent pl-[3px] text-black">
            <option>62 (75 / 367)</option>
          </select>
          <span className="pointer-events-none absolute right-[4px]">
            <Caret />
          </span>
        </div>
        <button type="button" aria-label="下一页" className="ml-[11px]">
          <Icon w={10} h={18}>
            <path d="M0 0v18l10-9z" fill="#222" />
          </Icon>
        </button>
        <button type="button" aria-label="最后一页" className="ml-[18px]">
          <Icon w={16} h={18}>
            <path d="M8 0v18l8-9zM1 1h3l2 8-2 8H1z" fill="#222" />
          </Icon>
        </button>
        <button type="button" aria-label="上一视图" className="ml-[14px]">
          <Icon w={22} h={22}>
            <path d="M1 1h13v11H1zM1 3h13" stroke={BLUE} strokeWidth="1.500" fill="#fff" />
            <path d="M8 9h12v12H8z" fill="#fff" stroke="#777" strokeWidth="1.500" />
            <path d="M12 5h8M15 2l-4 3 4 3" stroke={GREEN} strokeWidth="1.800" />
          </Icon>
        </button>
        <button type="button" aria-label="下一视图" className="ml-[10px]">
          <Icon w={22} h={22}>
            <path d="M1 1h17v12H1zM1 3h17" stroke="#ccc" strokeWidth="1.500" />
            <path d="M11 10h9v10h-9z" fill="#f3f3f3" stroke="#ccc" strokeWidth="1.500" />
            <path d="M2 17h8" stroke="#d5dfda" strokeWidth="1.800" />
          </Icon>
        </button>
      </div>
      <div className="flex items-center">
        <Icon w={14} h={18}>
          <path d="M1 1h12v16H1zM3 5h8M3 8h8M3 11h8M3 14h8" stroke="#999" strokeWidth="1.300" />
        </Icon>
        <span className="ml-[9px] flex h-[22px] w-[29px] items-center justify-center bg-[#d5bde8]">
          <Icon w={16} h={20}>
            <path d="M2 0v5h12V0M2 20v-5h12v5M2 7h12v6H2zM4 10h8M4 2h8M4 18h8" stroke="#888" strokeWidth="1.300" />
          </Icon>
        </span>
        <span className="ml-[7px]">
          <Icon w={20} h={18}>
            <path d="M1 1h8v16H1zM11 1h8v16h-8zM3 5h4M3 8h4M3 11h4M13 5h4M13 8h4M13 11h4" stroke="#999" strokeWidth="1.300" />
          </Icon>
        </span>
        <span className="ml-[13px]">
          <Icon w={20} h={20}>
            <path d="M9 0v8H0M11 0v8h9M9 20v-8H0M11 20v-8h9M1 2h6M1 5h6M13 2h6M13 5h6M1 15h6M1 18h6M13 15h6M13 18h6" stroke="#999" strokeWidth="1.300" />
          </Icon>
        </span>
        <span className="ml-[24px] w-[60px] whitespace-nowrap text-[#555]">213.73%</span>
        <span className="ml-[20px]">
          <Caret />
        </span>
        <button type="button" aria-label="缩小" className="ml-[4px]">
          <Icon>
            <circle cx="10" cy="10" r="9" stroke="#444" strokeWidth="1.200" fill="#fff" />
            <path d="M5 10h10" stroke="#444" strokeWidth="1.400" />
          </Icon>
        </button>
        <div className="relative ml-[7px] flex h-[20px] w-[116px] items-center">
          <span className="absolute left-1/2 h-[7px] w-px bg-[#333]" />
          <input
            type="range"
            aria-label="缩放比例"
            defaultValue={65}
            className="m-0 h-[2px] w-full appearance-none bg-[#333] [&::-webkit-slider-thumb]:h-[12px] [&::-webkit-slider-thumb]:w-[6px] [&::-webkit-slider-thumb]:appearance-none [&::-webkit-slider-thumb]:bg-[#222]"
          />
        </div>
        <button type="button" aria-label="放大" className="ml-[5px]">
          <Icon>
            <circle cx="10" cy="10" r="9" stroke="#444" strokeWidth="1.200" fill="#fff" />
            <path d="M5 10h10M10 5v10" stroke="#444" strokeWidth="1.400" />
          </Icon>
        </button>
      </div>
    </footer>
  );
}

/* ---------- taskbar ---------- */

type Task = { name: string; icon: ReactNode; state?: "running" | "active" | "alert" };

function Penguin({ scarf = "#d22", belly = "#fff" }: { scarf?: string; belly?: string }) {
  return (
    <>
      <path d="M5 27q5-3 9 1H5zM25 27q-5-3-9 1h9z" fill="#e89a1c" />
      <path d="M15 1q8 0 8 9 4 6 4 11l-3-2q-2 8-9 8t-9-8l-3 2q0-5 4-11 0-9 8-9z" fill="#0b0b0b" />
      <ellipse cx="15" cy="21" rx="6.500" ry="6" fill={belly} />
      <circle cx="12.500" cy="6.500" r="2" fill="#fff" />
      <circle cx="17.500" cy="6.500" r="2" fill="#fff" />
      <ellipse cx="15" cy="10.500" rx="4" ry="1.500" fill="#e89a1c" />
      <path d="M6 12q9 5 18 0l1 3q-9 5-14 3v5H8v-6l-3-2z" fill={scarf} />
    </>
  );
}

const topTasks: Task[] = [
  {
    name: "Edge",
    icon: (
      <Icon w={30} h={30}>
        <path d="M1 15A14 14 0 0 1 29 13q0 6-7 6-5 0-4-4 0-5-6-5Q4 10 1 15z" fill="#3cc6a8" />
        <path d="M1 15A14 14 0 0 1 20 2q-9 1-11 9-5 0-8 4z" fill="#2aa5d8" />
        <path d="M1 15q3-5 9-5 7 0 8 5-6-1-6 5 2 7 13 5-5 6-13 4Q2 27 1 15z" fill="#1f6fd0" />
      </Icon>
    ),
  },
  {
    name: "资源管理器",
    state: "running",
    icon: (
      <Icon w={30} h={30}>
        <path d="M2 3h11l3 3h12v18H2z" fill="#e9a91d" />
        <path d="M2 8h26v17H2z" fill="#fbd66c" />
        <path d="M7 15h17v11h-4v-5h-9v5H7z" fill="#3f8fd8" />
      </Icon>
    ),
  },
  {
    name: "KeePass",
    state: "running",
    icon: (
      <Icon w={30} h={30}>
        <circle cx="15" cy="15" r="13" fill="#b8c4f2" stroke="#eef" strokeWidth="2" />
        <path d="M11 14V9q0-3 4-3t4 3v5" stroke="#111" strokeWidth="2.600" />
        <path d="M8 13h14v10H8z" fill="#111" />
        <path d="M14 16h2v4h-2z" fill="#ccd" />
      </Icon>
    ),
  },
  {
    name: "IPTV",
    icon: (
      <Icon w={30} h={30}>
        <rect x="2" y="2" width="26" height="26" rx="6" stroke="#b3151b" strokeWidth="2" />
        <path d="M7 8v15M11 7v16M15 9v14M19 7v16M23 9v14M7 10q4-3 6 2M15 12q3-3 4 1M19 20h4" stroke="#b3151b" strokeWidth="1.600" />
      </Icon>
    ),
  },
  {
    name: "VMware",
    state: "running",
    icon: (
      <Icon w={30} h={30}>
        <path d="M12 3h15v17H12z" stroke="#2c9bd0" strokeWidth="4" />
        <path d="M3 10h15v16H3z" stroke="#ef8b1d" strokeWidth="4" />
        <path d="M12 10v8h6" stroke="#2c9bd0" strokeWidth="3" />
      </Icon>
    ),
  },
  {
    name: "Camtasia",
    state: "running",
    icon: (
      <Icon w={30} h={30}>
        <rect width="30" height="30" rx="2" fill="#f0594f" />
        <text x="5" y="25" fontSize="28" fontWeight="700" fill="#fff" fontFamily="Liberation Sans">C</text>
      </Icon>
    ),
  },
  {
    name: "Camtasia Recorder",
    icon: (
      <Icon w={30} h={30}>
        <rect width="30" height="30" rx="2" fill="#4f9d10" />
        <text x="5" y="25" fontSize="28" fontWeight="700" fill="#fff" fontFamily="Liberation Sans">C</text>
      </Icon>
    ),
  },
  { name: "QQ", icon: <Icon w={28} h={30} box="0 0 30 30"><Penguin /></Icon> },
  {
    name: "Notepad++",
    state: "running",
    icon: (
      <Icon w={30} h={30}>
        <path d="M2 3h15l5 5v20H3z" fill="#f3f6ea" />
        <path d="M3 17q9-4 19 0v11H3z" fill="#77b92c" />
        <path d="M3 22q9 4 19-1v7H3z" fill="#4d8f16" />
        <path d="M6 13q4-5 6 0t7-1M6 17q5 3 12-1M8 15h9" stroke="#333" strokeWidth="1.300" />
        <path d="M28 3l-6 18" stroke="#c98a3d" strokeWidth="2" />
      </Icon>
    ),
  },
  {
    name: "远程桌面",
    state: "running",
    icon: (
      <Icon w={30} h={30}>
        <path d="M1 2l25 1-2 18L3 19z" fill="#c9d2da" />
        <path d="M4 4l19 1-2 14-16-2z" fill="#1538b8" />
        <path d="M14 5l9 1-2 13-5-1z" fill="#6a92ea" />
        <ellipse cx="13" cy="26" rx="8" ry="3" fill="#b9bfc4" />
        <circle cx="23" cy="23" r="6" fill="#dfe2e4" />
        <path d="M20 20l3 3-3 3M26 20l-3 3 3 3" stroke="#888" strokeWidth="1.400" />
      </Icon>
    ),
  },
  {
    name: "Firefox",
    icon: (
      <Icon w={30} h={30}>
        <path d="M3 8q1-3 3-4v4q3-1 4-4 2 3 4 3 1-4 4-7 1 4 6 7 5 5 5 10 0 12-13 12T2 18q-1-6 1-10z" fill="#fb7a2d" />
        <path d="M18 0q1 4 6 7 5 5 5 10-1 6-5 8 2-8-2-13-5-4-4-12z" fill="#ffd54a" />
        <path d="M4 22q4 8 14 6 6-2 8-7-6 4-13 2z" fill="#ef3f6b" />
        <circle cx="15" cy="16" r="6" fill="#7a4be0" />
        <path d="M8 14q5-1 7-4-5-2-8 0z" fill="#fb9a3d" />
      </Icon>
    ),
  },
  {
    name: "百度网盘",
    icon: (
      <Icon w={30} h={30}>
        <rect width="30" height="30" rx="5" fill="#fff" />
        <circle cx="15" cy="10.500" r="4.500" stroke="#2a8cf0" strokeWidth="2.800" />
        <circle cx="10" cy="18.500" r="4.500" stroke="#37b5ee" strokeWidth="2.800" />
        <circle cx="20" cy="18.500" r="4.500" stroke="#37b5ee" strokeWidth="2.800" />
        <path d="M13 14l3 3" stroke="#ee4b56" strokeWidth="4" />
        <path d="M9 28.500h5" stroke="#e33" strokeWidth="2.500" />
        <path d="M15 28.500h5" stroke="#37f" strokeWidth="2.500" />
      </Icon>
    ),
  },
  {
    name: "终端",
    icon: (
      <Icon w={30} h={30}>
        <path d="M2 1h26v28H2z" fill="#9aa2aa" />
        <path d="M6 3h20v9H6z" fill="#dbe7f6" />
        <path d="M6 3h20v3H6z" fill="#6f9cdc" />
        <path d="M12 14h16v15H12z" fill="#222" />
        <circle cx="8" cy="22" r="6.500" fill="#e6e6e6" />
        <path d="M6 26l3-8 2 7" stroke="#555" strokeWidth="1.500" />
      </Icon>
    ),
  },
  {
    name: "FileZilla",
    icon: (
      <Icon w={30} h={30}>
        <path d="M0 0h30v30H0z" fill="#ad0b0b" />
        <text x="3" y="23" fontSize="22" fontWeight="700" fontStyle="italic" fill="#fff" fontFamily="Liberation Sans">Fz</text>
      </Icon>
    ),
  },
  {
    name: "Everything",
    icon: (
      <Icon w={30} h={30}>
        <circle cx="17" cy="11" r="9" stroke="#f47b0b" strokeWidth="4" />
        <path d="M11 18L2 28" stroke="#f47b0b" strokeWidth="4.500" />
      </Icon>
    ),
  },
  {
    name: "微信",
    icon: (
      <Icon w={30} h={30}>
        <path d="M10 3q9 0 9 8.500T10 20q-3 0-4-1l-4 2 1-4q-3-2-3-5.500Q0 3 10 3z" fill="#2fce6d" />
        <circle cx="7" cy="9" r="1.400" fill="#135f31" />
        <circle cx="13" cy="9" r="1.400" fill="#135f31" />
        <path d="M20 11q8 0 9.500 7 0 5-3.500 6.500l1 3-4-1.500q-10 1-11-7.500 1-7 8-7.500z" fill="#ececec" />
        <circle cx="18" cy="16" r="1.200" fill="#666" />
        <circle cx="24" cy="16" r="1.200" fill="#666" />
      </Icon>
    ),
  },
  {
    name: "向日葵",
    icon: (
      <Icon w={30} h={30}>
        <rect width="30" height="30" rx="5" fill="#f1560d" />
        <path d="M6 5l10 6-2 7-8 3z" fill="#fff" />
        <path d="M25 9v15l-10-5 2-6z" fill="#fff" />
      </Icon>
    ),
  },
  {
    name: "飞鸟",
    icon: (
      <Icon w={30} h={30}>
        <rect width="30" height="30" rx="2" fill="#3f76ea" />
        <path d="M3 8q7 0 9 4 2-7 10-8l-2 4 6-1-3 4 3 1-4 2q0 5-4 7l3 6-6-5q-6 0-8-3l5-1q-4-1-5-4l3 0q-5-2-7-6z" fill="#fff" />
      </Icon>
    ),
  },
  {
    name: "工具",
    icon: (
      <Icon w={30} h={30}>
        <path d="M4 6q3-3 5-2M15 3q3-3 5 0" stroke="#cfcfcf" strokeWidth="3.400" />
        <path d="M8 15q6-4 8 0t9-2M9 20q3-4 7 0t-2 7q8-3 10-1" stroke="#3a8ed0" strokeWidth="4" />
      </Icon>
    ),
  },
  {
    name: "Wireshark",
    icon: (
      <Icon w={30} h={30}>
        <path d="M1 26Q8 4 28 2q-3 11 0 24z" fill="#1a62d8" />
        <path d="M6 24Q12 8 24 4q-10 8-10 20z" fill="#4d90f2" />
        <path d="M0 25q14-3 29 0v4H0z" fill="#9eb4cf" />
      </Icon>
    ),
  },
  {
    name: "书库",
    icon: (
      <Icon w={30} h={30}>
        <path d="M1 4h4v23H1zM6 4h3v23H6z" fill="#8a4d1c" />
        <path d="M10 7h4v20h-4z" fill="#7b8a8f" />
        <path d="M15 3l5-1 2 24-5 1z" fill="#e6c25a" />
        <path d="M21 12l4-1 4 15-5 1z" fill="#3e7cc4" />
      </Icon>
    ),
  },
  {
    name: "Snagit",
    icon: (
      <Icon w={30} h={30}>
        <rect width="30" height="30" rx="2" fill="#f2504b" />
        <text x="6" y="25" fontSize="27" fontWeight="700" fill="#fff" fontFamily="Liberation Sans">S</text>
      </Icon>
    ),
  },
  {
    name: "FinalShell",
    state: "running",
    icon: (
      <Icon w={30} h={30}>
        <path d="M0 17q6 5 13 3 8-2 7-7-3-5-7-1 0 3 3 3" stroke="#ee4a3b" strokeWidth="3" />
        <path d="M9 8q7-8 15-3 7 5 4 14Q23 30 11 29 2 27 1 19q5 5 13 3 10-2 9-10-5-8-14-4z" fill="#ee4a3b" />
      </Icon>
    ),
  },
];

const bottomTasks: Task[] = [
  {
    name: "Total Commander",
    icon: (
      <Icon w={28} h={28}>
        <path d="M0 0h28v28H0z" fill="#3a50cf" />
        <path d="M7 0h14v10H7z" fill="#c9ccd6" />
        <path d="M15 2h4v7h-4z" fill="#3a50cf" />
        <path d="M3 13h22v15H3z" fill="#f5f2ee" />
        <path d="M5 16h18M5 19h18M5 22h7" stroke="#d99" />
        <text x="13" y="27" fontSize="8" fontWeight="700" fill="#333" fontFamily="Liberation Sans">64</text>
      </Icon>
    ),
  },
  {
    name: "地图",
    icon: (
      <Icon w={30} h={30}>
        <path d="M0 0h30v30H0z" fill="#bfe0c4" />
        <path d="M0 14h15v16H0z" fill="#f4dd9a" />
        <path d="M0 8h14v8H0z" fill="#a8d2ee" />
        <path d="M2 0l13 15" stroke="#c04a5e" strokeWidth="4" />
        <circle cx="16" cy="15" r="3.500" fill="#e22" />
        <path d="M17 16l9 9h-5l3 5-3 1-2-5-3 3z" fill="#fff" stroke="#444" />
      </Icon>
    ),
  },
  {
    name: "Word",
    state: "running",
    icon: (
      <Icon w={28} h={28}>
        <path d="M13 5h13v18H13z" fill="#fff" stroke="#1d4b8f" />
        <path d="M16 8h9M16 11h9M16 14h9M16 17h9M16 20h9" stroke="#1d4b8f" strokeWidth="1.300" />
        <path d="M0 2l16-2v28L0 26z" fill="#1d4b8f" />
        <text x="1" y="20" fontSize="15" fontWeight="700" fill="#fff" fontFamily="Liberation Sans">W</text>
      </Icon>
    ),
  },
  {
    name: "福昕PDF",
    state: "active",
    icon: (
      <Icon w={30} h={30}>
        <path d="M0 0h24l6 6v24H0z" fill="#68256a" />
        <text x="7" y="19" fontSize="21" fontWeight="700" fontStyle="italic" fill="#fff" fontFamily="Liberation Sans">G</text>
        <text x="8" y="28" fontSize="8" fontWeight="700" fill="#fff" fontFamily="Liberation Sans">PDF</text>
      </Icon>
    ),
  },
  {
    name: "会议",
    state: "alert",
    icon: (
      <Icon w={30} h={30}>
        <circle cx="15" cy="15" r="15" fill="#fff" />
        <path d="M2 17q5 11 15 9 8-3 9-13" stroke="#e5503b" strokeWidth="2.200" />
        <path d="M5 20q6 5 12 3 6-3 6-11" stroke="#f0a23c" strokeWidth="1.800" />
        <path d="M5 14Q6 4 14 4q8 1 8 9" stroke="#4f7fd6" strokeWidth="1.600" />
        <path d="M9 17l5-8 5 8M11 15h6" stroke="#3563c0" strokeWidth="1.600" />
      </Icon>
    ),
  },
];

function TaskButton({ task }: { task: Task }) {
  const tone = task.state === "active" ? "bg-[#6b6b6b]" : task.state === "alert" ? "bg-[#b06e35]" : "";
  return (
    <button type="button" aria-label={task.name} className={`flex h-[50px] w-[62px] shrink-0 flex-col items-center justify-between ${tone}`}>
      <span className="flex h-[47px] items-center">{task.icon}</span>
      {task.state === "running" ? <span className="h-[3px] w-[50px] bg-[#76aee0]" /> : null}
      {task.state === "active" ? <span className="h-[3px] w-full bg-[#76aee0]" /> : null}
      {task.state === "alert" ? <span className="h-[3px] w-full bg-[#fb7b0b]" /> : null}
    </button>
  );
}

function Taskbar() {
  return (
    <div className="flex h-[101px] items-center justify-between bg-[linear-gradient(90deg,#22343f_0,#26343c_240px,#464647_340px,#474747_1720px,#1b2743_1810px,#1b2743_100%)] text-white">
      <div className="flex items-center">
        <button type="button" aria-label="开始" className="ml-[20px]">
          <Icon w={20} h={20}>
            <path d="M0 3l8-1v7.500H0zM9 2l11-2v9.500H9zM0 10.500h8V18l-8-1zM9 10.500h11V20L9 18z" fill="#fff" />
          </Icon>
        </button>
        <button type="button" aria-label="任务视图" className="ml-[40px]">
          <Icon w={22} h={20}>
            <path d="M1 0v3h12V0M1 20v-3h12v3M1.500 5h11v10h-11zM18.500 0v20" stroke="#fff" strokeWidth="1.300" />
            <path d="M17 7h3v4h-3z" fill="#fff" />
          </Icon>
        </button>
        <div className="ml-[21px] flex h-[101px] flex-col justify-between">
          <div className="flex">
            {topTasks.map((task) => (
              <TaskButton key={task.name} task={task} />
            ))}
          </div>
          <div className="flex">
            {bottomTasks.map((task) => (
              <TaskButton key={task.name} task={task} />
            ))}
          </div>
        </div>
      </div>

      <div className="flex items-center font-['Noto_Sans','Noto_Sans_CJK_SC',sans-serif]">
        <Icon w={16} h={10}>
          <path d="M1 9l7-8 7 8" stroke="#fff" strokeWidth="1.500" />
        </Icon>
        <div className="ml-[12px] grid grid-cols-3 gap-x-[10px] gap-y-[30px]">
          <Icon w={20} h={20}>
            <rect x="5" y="0" width="8" height="14" rx="3" fill="#fff" />
            <path d="M2 9q0 8 7 8t7-8M9 17v3M5 19.500h8" stroke="#fff" strokeWidth="1.300" />
          </Icon>
          <Icon w={20} h={20} box="0 0 30 30">
            <Penguin scarf="#333" />
          </Icon>
          <Icon w={20} h={20} box="0 0 30 30">
            <Penguin />
            <path d="M16 15h14v11H16z" fill="#f5b93b" />
          </Icon>
          <Icon w={20} h={20}>
            <path d="M6 6h12v10H6z" fill="#fff" />
            <path d="M19 9v4M1 2v4M5 2v4M0 6h6v3l-2 2H2L0 9zM3 11v4" stroke="#fff" strokeWidth="1.300" />
          </Icon>
          <Icon w={20} h={20}>
            <path d="M5 3h14v11H3v-4M11 14v4M7 18.500h8" stroke="#fff" strokeWidth="1.300" />
            <path d="M1 2h4v6H1zM3 8v3" stroke="#fff" strokeWidth="1.200" />
          </Icon>
          <Icon w={20} h={20}>
            <path d="M1 7h3l4-4v14l-4-4H1z" stroke="#fff" strokeWidth="1.300" />
            <path d="M11 7q2 3 0 6M14 5q3 5 0 10M17 3q4 7 0 14" stroke="#fff" strokeWidth="1.200" />
          </Icon>
        </div>
        <span className="ml-[12px] text-[15px]">中</span>
        <span className="ml-[17px]">
          <Icon w={20} h={20}>
            <path d="M3 1h16l-2 17-14 1z" fill="#21a121" />
            <text x="5" y="17" fontSize="17" fontWeight="700" fill="#fff" fontFamily="Liberation Sans">S</text>
          </Icon>
        </span>
        <time className="ml-[20px] flex w-[80px] flex-col items-center gap-[6px] pb-[2px] text-[15px] leading-[24px]">
          <span>9:38</span>
          <span>星期二</span>
          <span>2021/6/1</span>
        </time>
        <button type="button" aria-label="通知" className="ml-[20px]">
          <Icon w={22} h={22}>
            <path d="M2 2h18v14h-6l-3 4-3-4H2z" stroke="#fff" strokeWidth="1.400" />
          </Icon>
        </button>
        <span className="ml-[25px] h-[101px] w-[6px] border-l border-[#8a92a3]" />
      </div>
    </div>
  );
}

export default function App() {
  return (
    <div className="w-full overflow-hidden bg-[#efefef] font-['Noto_Sans','Noto_Sans_CJK_SC',sans-serif] leading-5">
      <TitleBar />
      <MenuBar />
      <Ribbon />
      <DocTabs />
      <Workspace />
      <StatusBar />
      <Taskbar />
    </div>
  );
}
